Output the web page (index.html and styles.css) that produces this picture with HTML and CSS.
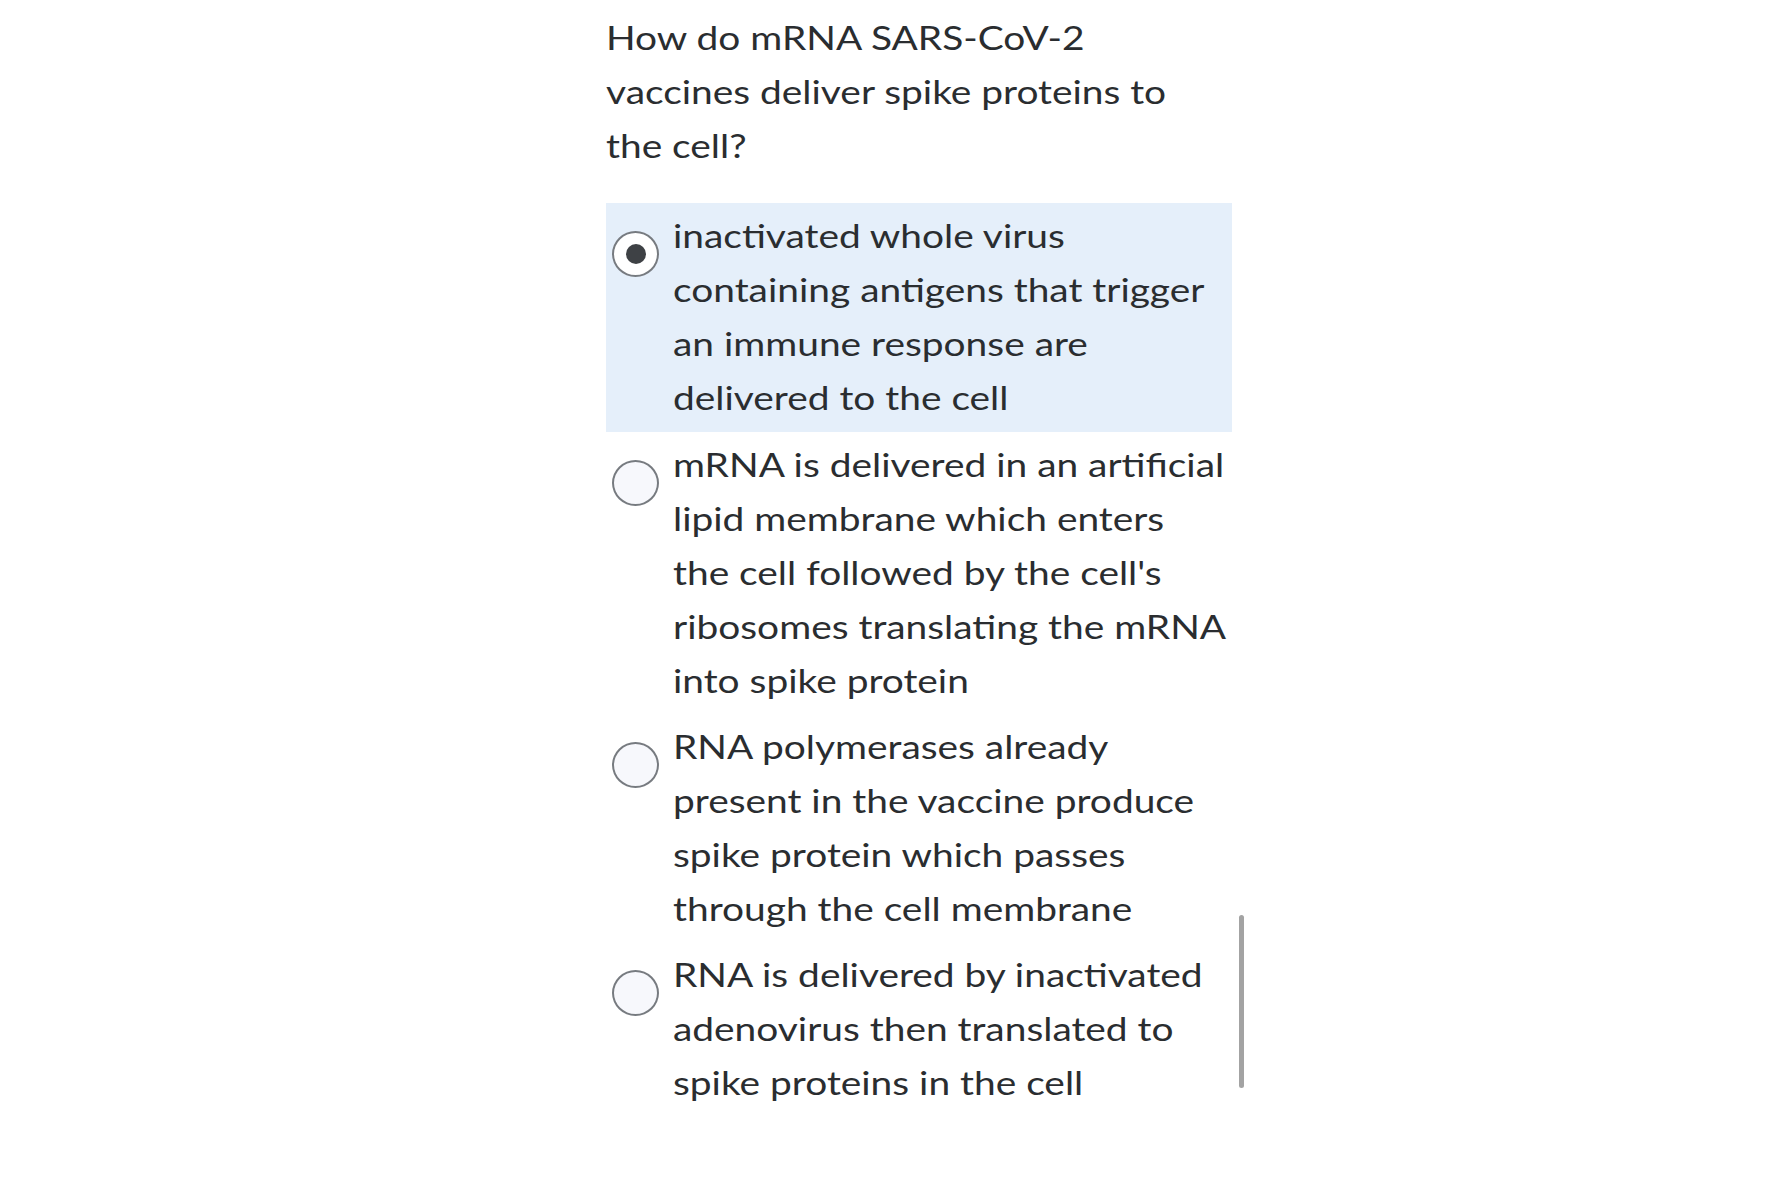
FILE: index.html
```html
<!DOCTYPE html>
<html lang="en">
<head>
<meta charset="utf-8">
<title>Quiz question</title>
<link rel="stylesheet" href="styles.css">
</head>
<body>
<main class="page">
  <div class="question">
    <p class="question-text"><span class="wide">How do mRNA SARS-CoV-2<br>vaccines deliver spike proteins to<br>the cell?</span></p>
    <div class="answers">
      <label class="answer selected">
        <span class="radio checked"><span class="dot"></span></span>
        <span class="answer-text wide">inactivated whole virus<br>containing antigens that trigger<br>an immune response are<br>delivered to the cell</span>
      </label>
      <label class="answer">
        <span class="radio"></span>
        <span class="answer-text wide">mRNA is delivered in an artificial<br>lipid membrane which enters<br>the cell followed by the cell's<br>ribosomes translating the mRNA<br>into spike protein</span>
      </label>
      <label class="answer">
        <span class="radio"></span>
        <span class="answer-text wide">RNA polymerases already<br>present in the vaccine produce<br>spike protein which passes<br>through the cell membrane</span>
      </label>
      <label class="answer">
        <span class="radio"></span>
        <span class="answer-text wide">RNA is delivered by inactivated<br>adenovirus then translated to<br>spike proteins in the cell</span>
      </label>
    </div>
  </div>
  <div class="scrollbar"></div>
</main>
</body>
</html>
```

FILE: styles.css
```css
html, body {
  margin: 0;
  padding: 0;
  background: #ffffff;
}

body {
  font-family: Lato, "Noto Sans", sans-serif;
  color: #2a2d30;
}

.page {
  position: relative;
  width: 1792px;
  height: 1201px;
  display: flex;
  justify-content: flex-start;
  padding-left: 606px;
  box-sizing: border-box;
}

.question {
  width: 626px;
  padding-top: 10px;
}

.question-text {
  margin: 0 0 31px 0;
  font-size: 33px;
  line-height: 54px;
  white-space: nowrap;
}

.wide {
  display: inline-block;
  transform: scaleX(1.178);
  transform-origin: left center;
}

.answers {
  display: flex;
  flex-direction: column;
}

.answer {
  display: flex;
  align-items: flex-start;
  padding: 5px 0 7px 6px;
  font-size: 33px;
  line-height: 54px;
  white-space: nowrap;
}

.answer.selected {
  background: #e5effa;
  padding-bottom: 8px;
}

.radio {
  flex: none;
  width: 43px;
  height: 42px;
  margin-top: 23px;
  margin-right: 14px;
  border: 2px solid #777b80;
  border-radius: 50%;
  background: #f7f8fc;
  display: flex;
  align-items: center;
  justify-content: center;
}

.radio.checked {
  background: #ffffff;
}

.dot {
  width: 20px;
  height: 20px;
  border-radius: 50%;
  background: #3e4145;
}

.answer-text {
  display: block;
}

.scrollbar {
  position: absolute;
  left: 1239px;
  top: 915px;
  width: 5px;
  height: 173px;
  border-radius: 3px;
  background: #a3a3a3;
}
```
